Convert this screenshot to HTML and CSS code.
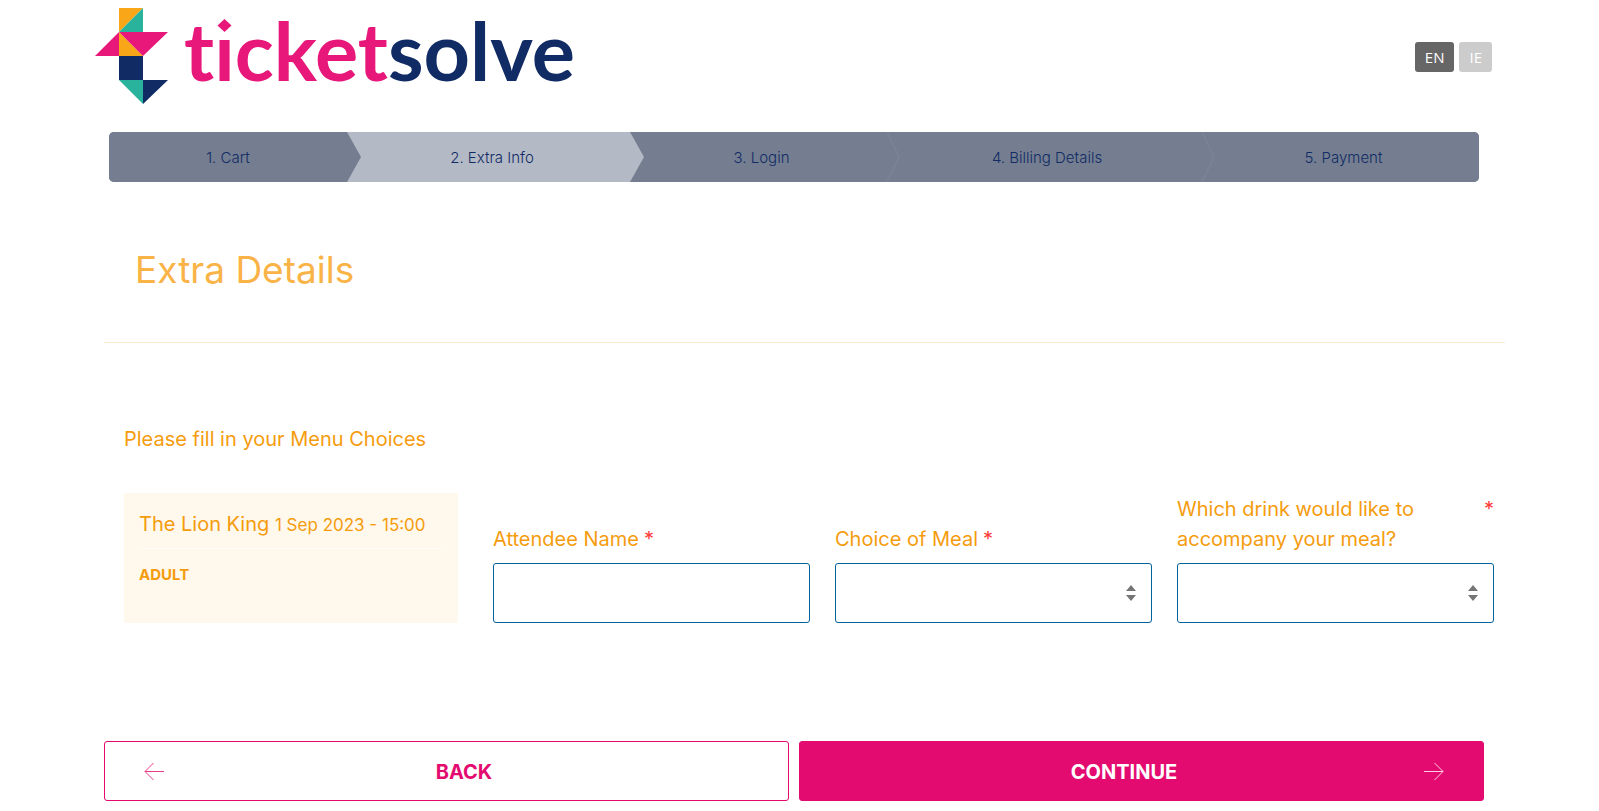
FILE: index.html
```html
<!DOCTYPE html>
<html lang="en">
<head>
<meta charset="utf-8">
<title>Extra Details - Ticketsolve</title>
<link rel="stylesheet" href="styles.css">
</head>
<body>
<div class="page">
  <header class="header">
    <a class="logo" href="#">
      <svg class="logo-art" width="500" height="98" viewBox="0 0 500 98" role="img" aria-label="ticketsolve">
        <path fill="#f9a719" d="M24 0h24L24 24z"/>
        <path fill="#2ab39c" d="M48 0v24H24z"/>
        <path fill="#e8177a" d="M24 24v24H0z"/>
        <path fill="#f9a719" d="M24 24l24 24H24z"/>
        <path fill="#e8177a" d="M24 24h49L48 48z"/>
        <path fill="#112b65" d="M24 48h24v24H24z"/>
        <path fill="#2ab39c" d="M24 72h24v24z"/>
        <path fill="#112b65" d="M48 72h25L48 96z"/>
        <text class="wordmark" x="89" y="73"><tspan class="wordmark-ticket">ticket</tspan><tspan class="wordmark-solve">solve</tspan></text>
        <path fill="#fff" d="M119 6h21v22h-21z"/>
        <path fill="#e8177a" d="M129.500 11l7 6.500-7 6.500-7-6.500z"/>
      </svg>
    </a>
    <nav class="languages" aria-label="Language">
      <button class="language language-current" type="button">EN</button>
      <button class="language" type="button">IE</button>
    </nav>
  </header>

  <ol class="steps">
    <li class="step">1. Cart</li>
    <li class="step step-current">2. Extra Info</li>
    <li class="step">3. Login</li>
    <li class="step">4. Billing Details</li>
    <li class="step">5. Payment</li>
  </ol>

  <main class="main">
    <h1 class="title">Extra Details</h1>
    <form class="form">
      <h2 class="subtitle">Please fill in your Menu Choices</h2>
      <div class="fields">
        <section class="ticket">
          <p class="ticket-event">The Lion King <span class="ticket-date">1 Sep 2023 - 15:00</span></p>
          <p class="ticket-type">ADULT</p>
        </section>
        <div class="field">
          <label class="label" for="name"><span>Attendee Name</span><span class="required">*</span></label>
          <input class="control" id="name" type="text" required>
        </div>
        <div class="field">
          <label class="label" for="meal"><span>Choice of Meal</span><span class="required">*</span></label>
          <div class="select">
            <select class="control" id="meal" required><option value=""></option></select>
            <svg class="select-icon" width="10" height="16" viewBox="0 0 10 16" aria-hidden="true"><path fill="#757575" d="M5 0l5 6H0zM0 10h10l-5 6z"/></svg>
          </div>
        </div>
        <div class="field">
          <label class="label label-long" for="drink"><span>Which drink would like to accompany your meal?</span><span class="required">*</span></label>
          <div class="select">
            <select class="control" id="drink" required><option value=""></option></select>
            <svg class="select-icon" width="10" height="16" viewBox="0 0 10 16" aria-hidden="true"><path fill="#757575" d="M5 0l5 6H0zM0 10h10l-5 6z"/></svg>
          </div>
        </div>
      </div>
      <div class="actions">
        <button class="button button-back" type="button">
          <svg class="arrow" width="20" height="18" viewBox="0 0 20 18" aria-hidden="true"><path d="M20 8.500H1M9.500 0L1 8.500l8.500 8.500"/></svg>
          <span class="button-text">BACK</span>
        </button>
        <button class="button button-continue" type="submit">
          <span class="button-text">CONTINUE</span>
          <svg class="arrow" width="20" height="18" viewBox="0 0 20 18" aria-hidden="true"><path d="M0 8.500h19M10.500 0L19 8.500l-8.500 8.500"/></svg>
        </button>
      </div>
    </form>
  </main>
</div>
</body>
</html>
```
FILE: styles.css
```css
* { box-sizing: border-box; }

body {
  margin: 0;
  background: #fff;
  color: #f59c0e;
  font-family: Inter, "Liberation Sans", sans-serif;
  font-size: 20px;
  line-height: 30px;
}

h1, h2, p, ol { margin: 0; padding: 0; font-weight: 400; }

.page { padding: 8px 94px 10px; }

.header {
  display: flex;
  align-items: center;
  justify-content: space-between;
  padding: 0 13px 0 1px;
}

.logo { display: flex; }
.logo-art { overflow: visible; }

.wordmark {
  font-family: Lato, sans-serif;
  font-size: 81px;
  font-weight: 700;
  font-variant-ligatures: none;
}
.wordmark-ticket { fill: #e8177a; }
.wordmark-solve { fill: #112b65; }

.languages { display: flex; gap: 5px; }

.language {
  padding: 5px 10px;
  border: 0;
  border-radius: 3px;
  background: #ccc;
  color: #fff;
  font-family: "Open Sans", sans-serif;
  font-size: 15px;
  line-height: 20px;
}
.language-current { background: #666; }

.steps {
  display: grid;
  grid-template-columns: 238fr 283fr 256fr 315fr 278fr;
  margin: 26px 26px 0 15px;
  overflow: hidden;
  border-radius: 5px;
  background: #747e90;
  color: #112b65;
  font-size: 15px;
  font-weight: 300;
  line-height: 48px;
  list-style: none;
  text-align: center;
}

.step {
  position: relative;
  padding: 2px 0 0 7px;
  background: #747e90;
}
.step:first-child { padding-left: 0; }

.step::after {
  content: "";
  position: absolute;
  z-index: 1;
  top: 0;
  left: 100%;
  width: 14px;
  height: 100%;
  background: #798395;
  clip-path: polygon(0 0, 2px 0, 100% 50%, 2px 100%, 0 100%, 12px 50%);
}
.step:first-child::after,
.step-current::after { clip-path: polygon(0 0, 100% 50%, 0 100%); }
.step:first-child::after { background: #747e90; }
.step:last-child::after { display: none; }
.step-current, .step-current::after { background: #b4bac5; }

.main { padding-left: 10px; }

.title {
  padding: 63px 31px 47px;
  border-bottom: 1px solid #fdebd0;
  color: #f9b347;
  font-size: 37px;
  line-height: 50px;
}

.form { padding: 81px 11px 0 0; }

.subtitle {
  padding-left: 20px;
  font-size: 20px;
}

.fields {
  display: grid;
  grid-template-columns: 344px 1fr 1fr 1fr;
  align-items: end;
  column-gap: 25px;
  padding: 39px 0 0 20px;
}

.ticket {
  align-self: stretch;
  margin-right: 10px;
  padding: 16px 15px;
  background: #fff8ec;
}
.ticket-event {
  padding-bottom: 8px;
  border-bottom: 1px solid #fffdf9;
  white-space: nowrap;
}
.ticket-date { font-size: 17px; }
.ticket-type {
  padding-top: 11px;
  font-size: 15px;
  font-weight: 700;
}

.label {
  display: flex;
  gap: 5px;
  padding: 1px 0 9px;
}
.label-long { justify-content: space-between; }
.required { color: #ff3b3b; }

.control {
  display: block;
  width: 100%;
  height: 60px;
  padding: 0 15px;
  border: 1px solid #00639a;
  border-radius: 3px;
  background: #fff;
  color: inherit;
  font: inherit;
  appearance: none;
}

.select { position: relative; }
.select-icon {
  position: absolute;
  top: 22px;
  right: 16px;
  pointer-events: none;
}

.actions {
  display: grid;
  grid-template-columns: 1fr 1fr;
  gap: 10px;
  padding: 118px 10px 0 0;
}

.button {
  display: flex;
  align-items: center;
  gap: 15px;
  height: 60px;
  padding: 1px 39px 0;
  border: 1px solid #e40b70;
  border-radius: 3px;
  font-family: inherit;
  font-size: 20px;
  font-weight: 700;
}
.button-text { flex: 1; text-align: center; }
.button-back { background: #fff; color: #e40b70; }
.button-continue { background: #e40b70; color: #fff; }

.arrow {
  fill: none;
  stroke: currentColor;
  stroke-width: 1;
  opacity: 0.8;
}
```
